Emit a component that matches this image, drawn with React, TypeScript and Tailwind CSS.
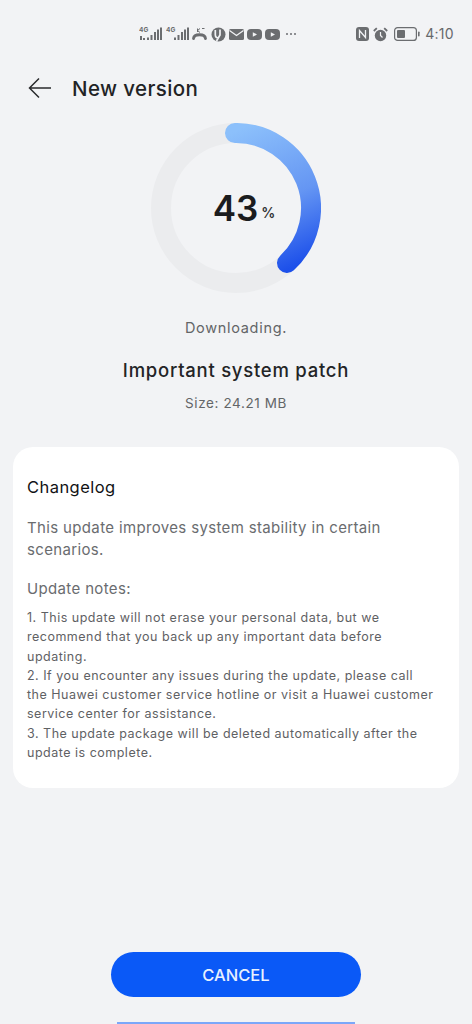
import React from "react";

const font = { fontFamily: "Inter, 'Noto Sans', sans-serif" };
const ICON = "#6b6d70";

const notes = [
  "1. This update will not erase your personal data, but we",
  "recommend that you back up any important data before",
  "updating.",
  "2. If you encounter any issues during the update, please call",
  "the Huawei customer service hotline or visit a Huawei customer",
  "service center for assistance.",
  "3. The update package will be deleted automatically after the",
  "update is complete.",
];

function Signal({ slot }: { slot: boolean }) {
  return (
    <svg width="23" height="16" viewBox="0 0 23 16" fill={ICON}>
      <text x="0" y="6" fontSize="6.5" fontWeight="700" fontFamily="Inter, sans-serif">4G</text>
      {slot && <rect x="1" y="10" width="2" height="4" />}
      {slot && <rect x="4" y="12" width="2" height="2" />}
      <rect x="8" y="11.5" width="2" height="2.5" />
      <rect x="11.500" y="9" width="2" height="5" />
      <rect x="15" y="6" width="2" height="8" />
      <rect x="18" y="3.5" width="2" height="10.5" />
      <rect x="21" y="1.5" width="2" height="12.5" />
    </svg>
  );
}

function Yt() {
  return (
    <svg width="15" height="11" viewBox="0 0 15 11" className="block">
      <rect width="15" height="11" rx="4" fill={ICON} />
      <path d="M5.8 3.2 10 5.5 5.8 7.8Z" fill="#f2f3f5" />
    </svg>
  );
}

function StatusBar() {
  return (
    <div className="flex h-[68px] items-start justify-between pl-[139px] pr-[18px] pt-[26px]">
      <div className="flex h-[16px] items-center">
        <Signal slot />
        <span className="w-[4px]" />
        <Signal slot={false} />
        <svg width="15" height="16" viewBox="0 0 15 16" fill="none" stroke={ICON} className="ml-[3px]">
          <path d="M1.500 12.500c.5-5 11.500-5 12 0" strokeWidth="2.800" strokeLinecap="round" />
          <path d="M5.500 2.500 5.500 6M5.500 4.500 8 2.500M5.500 4.500 8 6.500M10 2.500h2.500" strokeWidth="1" />
        </svg>
        <svg width="15" height="15" viewBox="0 0 15 15" className="ml-[4px]">
          <circle cx="7.500" cy="7.500" r="7" fill={ICON} />
          <path d="M4.300 3v4.500c0 2.500 1.700 3.500 3.200 3.500M9 2.500v5.500L5.500 14" fill="none" stroke="#f2f3f5" strokeWidth="1.700" />
        </svg>
        <svg width="15" height="11" viewBox="0 0 15 11" className="ml-[3px]">
          <rect width="15" height="11" rx="1.500" fill={ICON} />
          <path d="M.5 1.500 7.500 6.500 14.500 1.500" fill="none" stroke="#f2f3f5" strokeWidth="1.200" />
        </svg>
        <span className="w-[3px]" />
        <Yt />
        <span className="w-[3px]" />
        <Yt />
        <div className="ml-[6px] flex gap-[2px]">
          <span className="h-[2px] w-[2px] rounded-full bg-[#6b6d70]" />
          <span className="h-[2px] w-[2px] rounded-full bg-[#6b6d70]" />
          <span className="h-[2px] w-[2px] rounded-full bg-[#6b6d70]" />
        </div>
      </div>
      <div className="flex h-[16px] items-center">
        <svg width="13" height="14" viewBox="0 0 13 14">
          <rect width="13" height="14" rx="3" fill={ICON} />
          <path d="M3.500 11V3.500L9.500 10.500V3" fill="none" stroke="#f2f3f5" strokeWidth="1.300" />
        </svg>
        <svg width="15" height="15" viewBox="0 0 15 15" className="ml-[4px]">
          <circle cx="7.500" cy="8.500" r="5.700" fill={ICON} />
          <path d="M7.500 5v3.500l2 2" fill="none" stroke="#f2f3f5" strokeWidth="1.200" />
          <path d="M.8 4 3.800 1.200M14.200 4 11.200 1.200" stroke={ICON} strokeWidth="1.800" />
        </svg>
        <svg width="26" height="14" viewBox="0 0 26 14" className="ml-[6px]">
          <rect x=".6" y=".6" width="21.800" height="12.800" rx="3" fill="none" stroke={ICON} strokeWidth="1.200" />
          <rect x="3" y="3" width="8" height="8" rx="1" fill={ICON} />
          <rect x="24" y="4.500" width="1.600" height="5" rx=".8" fill={ICON} />
        </svg>
        <span className="ml-[5px] text-[14px] leading-4 tracking-[0.3px] text-[#66686b]">4:10</span>
      </div>
    </div>
  );
}

function Ring() {
  return (
    <div className="relative h-[170px] w-[170px]">
      <svg width="170" height="170" viewBox="0 0 170 170" className="block">
        <defs>
          <linearGradient id="arcUse" gradientUnits="userSpaceOnUse" x1="80" y1="10" x2="140" y2="145">
            <stop offset="0" stopColor="#8cc0fb" />
            <stop offset="0.55" stopColor="#6596f3" />
            <stop offset="1" stopColor="#1d50ea" />
          </linearGradient>
        </defs>
        <circle cx="85" cy="85" r="75" fill="none" stroke="#ebecee" strokeWidth="20" />
        <path d="M84 10A75 75 0 0 1 136 140" fill="none" stroke="url(#arcUse)" strokeWidth="20" strokeLinecap="round" />
      </svg>
      <div className="absolute inset-0 flex items-center justify-center pl-[16px]">
        <span className="text-[35px] font-semibold leading-none text-[#1b1c1e]">43</span>
        <span className="ml-[3px] mt-[9px] text-[14px] font-semibold leading-none text-[#333436]">%</span>
      </div>
    </div>
  );
}

export default function App() {
  return (
    <div className="flex h-[1024px] flex-col overflow-hidden bg-[#f2f3f5]" style={font}>
      <StatusBar />
      <div className="flex h-[40px] items-center pl-[28px]">
        <svg width="24" height="22" viewBox="0 0 24 22" fill="none" stroke="#2a2b2d" strokeWidth="1.500">
          <path d="M23 11H1.500M11 1.500 1.500 11l9.500 9.500" />
        </svg>
        <span className="ml-[20px] translate-y-px text-[20.5px] font-medium tracking-[0.4px] text-[#222325]">New version</span>
      </div>
      <div className="mt-[15px] flex flex-col items-center">
        <Ring />
        <div className="mt-[25px] text-[14.5px] leading-5 tracking-[0.7px] text-[#636567]">Downloading.</div>
        <div className="mt-[20px] text-[18.5px] font-medium leading-6 tracking-[0.75px] text-[#232426]">Important system patch</div>
        <div className="mt-[11px] text-[13.5px] leading-5 tracking-[0.6px] text-[#636567]">Size: 24.21 MB</div>
      </div>
      <div className="mx-[13px] mt-[34px] h-[341px] rounded-[20px] bg-white pl-[14px] pr-[10px] pt-[28px]">
        <div className="text-[16.5px] font-normal leading-[24px] tracking-[0.45px] text-[#111214]">Changelog</div>
        <p className="mt-[18px] w-[380px] text-[15px] leading-[22px] tracking-[0.35px] text-[#6a6c6f]">
          This update improves system stability in certain scenarios.
        </p>
        <p className="mt-[17px] text-[15px] leading-[22px] tracking-[0.35px] text-[#6a6c6f]">Update notes:</p>
        <div className="mt-[8px] whitespace-nowrap text-[12.5px] leading-[19.3px] tracking-[0.5px] text-[#5f6164]">
          {notes.map((line) => (
            <p key={line}>{line}</p>
          ))}
        </div>
      </div>
      <div className="mt-auto flex flex-col items-center">
        <button className="flex h-[45px] w-[250px] items-center justify-center rounded-full bg-[#0a59f7] pt-[2px] text-[16.5px] font-medium text-[#e8f0fe]">CANCEL</button>
        <div className="mt-[25px] h-[2px] w-[238px] bg-[#7ba7f9]" />
      </div>
    </div>
  );
}
